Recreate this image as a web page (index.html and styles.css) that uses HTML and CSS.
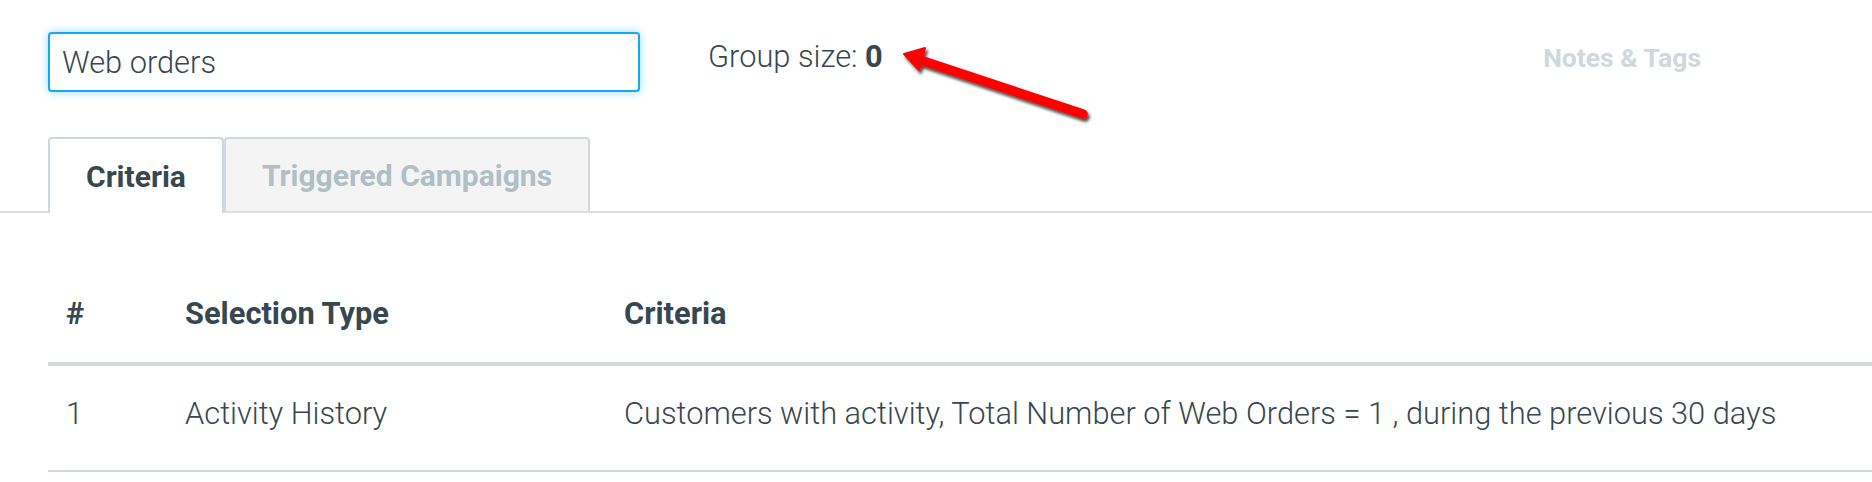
FILE: index.html
```html
<!DOCTYPE html>
<html lang="en">
<head>
<meta charset="utf-8">
<title>Group</title>
<link rel="stylesheet" href="styles.css">
</head>
<body>
<div class="page">
  <div class="top">
    <input class="name-input" type="text" value="Web orders">
    <div class="group-size">Group size: <b>0</b></div>
    <div class="notes">Notes &amp; Tags</div>
  </div>

  <div class="tabs">
    <div class="tab active">Criteria</div>
    <div class="tab">Triggered Campaigns</div>
  </div>

  <table class="criteria">
    <thead>
      <tr>
        <th class="c-num">#</th>
        <th class="c-type">Selection Type</th>
        <th>Criteria</th>
      </tr>
    </thead>
    <tbody>
      <tr>
        <td>1</td>
        <td>Activity History</td>
        <td>Customers with activity, Total Number of Web Orders = 1 , during the previous 30 days</td>
      </tr>
    </tbody>
  </table>

  <svg class="annot" width="1872" height="482" viewBox="0 0 1872 482" aria-hidden="true">
    <defs>
      <filter id="sh" x="-20%" y="-20%" width="140%" height="160%">
        <feDropShadow dx="2" dy="3" stdDeviation="1.6" flood-color="#000" flood-opacity="0.7"/>
      </filter>
    </defs>
    <g filter="url(#sh)" fill="#ff0000" stroke="#ff0000">
      <line x1="914" y1="58" x2="1083" y2="114" stroke-width="9.5" stroke-linecap="round"/>
      <polygon points="904,54 925,48 919,70" stroke-width="2" stroke-linejoin="round"/>
    </g>
  </svg>
</div>
</body>
</html>
```

FILE: styles.css
```css
html, body {
  margin: 0;
  padding: 0;
  background: #ffffff;
}

body {
  font-family: Roboto, "Liberation Sans", Arial, sans-serif;
  color: #37474f;
  width: 1872px;
  height: 482px;
  overflow: hidden;
}

.page {
  position: relative;
  padding-top: 32px;
}

.top {
  display: flex;
  align-items: center;
  height: 60px;
  padding-left: 48px;
}

.name-input {
  box-sizing: border-box;
  width: 592px;
  height: 60px;
  margin: 0;
  padding: 0 12px;
  border: 2px solid #14a9f5;
  border-radius: 4px;
  box-shadow: 0 0 9px rgba(20, 169, 245, 0.45);
  outline: none;
  font-family: Roboto, "Liberation Sans", Arial, sans-serif;
  font-weight: 300;
  font-size: 30.8px;
  color: #37474f;
  background: #fff;
}

.group-size {
  margin-left: 68px;
  margin-top: -12px;
  font-size: 30.8px;
  font-weight: 300;
  color: #37474f;
}

.group-size b {
  font-weight: 700;
}

.notes {
  margin-left: auto;
  margin-right: 171px;
  margin-top: -10px;
  font-size: 26.5px;
  font-weight: 700;
  color: #cfd8dc;
}

.tabs {
  display: flex;
  align-items: flex-end;
  margin-top: 45px;
  padding-left: 48px;
  border-bottom: 2px solid #dddddd;
  height: 74px;
}

.tab {
  box-sizing: border-box;
  height: 74px;
  display: flex;
  align-items: center;
  padding: 0 36px;
  border: 2px solid #cfd8dc;
  border-bottom: none;
  border-radius: 4px 4px 0 0;
  font-size: 30px;
  font-weight: 700;
  color: #b0bec5;
  background: #f4f4f4;
}

.tab.active {
  color: #37474f;
  background: #ffffff;
  height: 76px;
  margin-bottom: -2px;
}

.criteria {
  margin-top: 53px;
  margin-left: 48px;
  width: 1824px;
  border-collapse: collapse;
  font-size: 30.8px;
  line-height: 40px;
  color: #37474f;
}

.criteria th {
  text-align: left;
  font-weight: 700;
  padding: 28px 18px 28px;
  border-bottom: 4px solid #cfd8dc;
}

.criteria td {
  font-weight: 300;
  padding: 28px 18px 36px;
  border-bottom: 2px solid #cfd8dc;
}

.c-num {
  width: 83px;
}

.c-type {
  width: 403px;
}

.annot {
  position: absolute;
  left: 0;
  top: 0;
  pointer-events: none;
}
```
